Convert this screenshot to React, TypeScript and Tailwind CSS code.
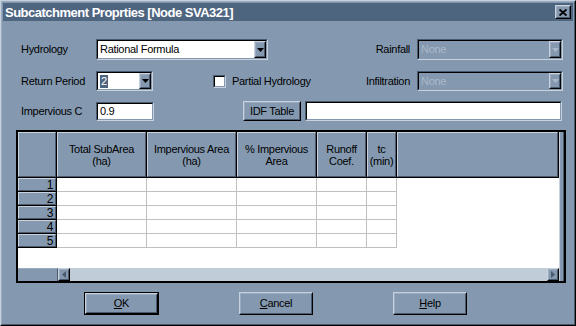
import React from 'react';

const font = { fontFamily: '"Liberation Sans", Arial, sans-serif' };

const Raised: React.FC<{ className?: string; children?: React.ReactNode }> = ({ className = '', children }) => (
  <div className={`border border-t-[#c8d2de] border-l-[#c8d2de] border-r-black border-b-black ${className}`}>
    <div className="w-full h-full border border-t-[#9aabc0] border-l-[#9aabc0] border-r-[#4a596c] border-b-[#4a596c] bg-[#8499b0] flex items-center justify-center">
      {children}
    </div>
  </div>
);

const Sunken: React.FC<{ className?: string; inner?: string; children?: React.ReactNode }> = ({ className = '', inner = 'bg-white', children }) => (
  <div className={`border border-t-[#4a596c] border-l-[#4a596c] border-r-[#c8d2de] border-b-[#c8d2de] ${className}`}>
    <div className={`w-full h-full border border-t-black border-l-black border-r-[#8499b0] border-b-[#8499b0] flex items-center ${inner}`}>
      {children}
    </div>
  </div>
);

const DownArrow: React.FC<{ disabled?: boolean }> = ({ disabled }) => (
  <svg width="7" height="4" viewBox="0 0 7 4">
    <polygon points="0,0 7,0 3.5,4" fill={disabled ? '#a9b8c8' : '#000'} />
  </svg>
);

const Combo: React.FC<{ w: string; text: string; disabled?: boolean; selected?: boolean }> = ({ w, text, disabled, selected }) => (
  <Sunken className={`${w} h-full`} inner={disabled ? 'bg-[#8499b0]' : 'bg-white'}>
    <div className="flex-1 pl-[2px] flex items-center">
      <span className={`leading-[13px] ${disabled ? 'text-[#a9b8c8]' : selected ? 'bg-[#4e6580] text-white px-[1px]' : 'text-black'}`}>{text}</span>
    </div>
    <Raised className="w-[12px] h-full mr-0">
      <DownArrow disabled={disabled} />
    </Raised>
  </Sunken>
);

const headers = [
  { w: 'w-[90px]', l1: 'Total SubArea', l2: '(ha)' },
  { w: 'w-[90px]', l1: 'Impervious Area', l2: '(ha)' },
  { w: 'w-[80px]', l1: '% Impervious', l2: 'Area' },
  { w: 'w-[50px]', l1: 'Runoff', l2: 'Coef.' },
  { w: 'w-[30px]', l1: 'tc', l2: '(min)' },
];

const HeadCell: React.FC<{ className: string; children?: React.ReactNode }> = ({ className, children }) => (
  <div className={`${className} h-full border-r border-b border-black`}>
    <div className="w-full h-full border border-t-[#c8d2de] border-l-[#c8d2de] border-r-[#4a596c] border-b-[#4a596c] bg-[#8499b0] flex flex-col items-center justify-center leading-[12px] text-center text-black">
      {children}
    </div>
  </div>
);

export default function App() {
  return (
    <div style={font} className="w-[576px] h-[326px] text-[11px] tracking-[-0.3px] text-black border border-t-[#c8d2de] border-l-[#c8d2de] border-r-black border-b-black overflow-hidden">
      <div className="w-full h-full border border-t-[#9aabc0] border-l-[#9aabc0] border-r-[#4a596c] border-b-[#4a596c] bg-[#8499b0] p-[1px] flex flex-col">
        {/* title bar */}
        <div className="h-[18px] bg-[#4e6580] flex items-center justify-between pl-[2px] pr-[2px]">
          <span className="text-white font-bold text-[13px] tracking-[-0.5px] leading-none">Subcatchment Proprties [Node SVA321]</span>
          <Raised className="w-[16px] h-[14px]">
            <svg width="8" height="7" viewBox="0 0 8 7">
              <path d="M0.5 0.5 L7.5 6.5 M7.5 0.5 L0.5 6.5" stroke="#000" strokeWidth="1.8" />
            </svg>
          </Raised>
        </div>

        {/* row 1 */}
        <div className="mt-[18px] h-[21px] flex items-center">
          <div className="w-[93px] pl-[18px]">Hydrology</div>
          <Combo w="w-[172px]" text="Rational Formula" />
          <div className="w-[149px] text-right pr-[7px]">Rainfall</div>
          <Combo w="w-[146px]" text="None" disabled />
        </div>

        {/* row 2 */}
        <div className="mt-[11px] h-[20px] flex items-center">
          <div className="w-[93px] pl-[18px]">Return Period</div>
          <Combo w="w-[57px]" text="2" selected />
          <div className="w-[264px] flex items-center">
            <Sunken className="ml-[60px] w-[13px] h-[13px]" />
            <span className="ml-[6px]">Partial Hydrology</span>
            <span className="ml-auto pr-[7px]">Infiltration</span>
          </div>
          <Combo w="w-[146px]" text="None" disabled />
        </div>

        {/* row 3 */}
        <div className="mt-[10px] h-[20px] flex items-center">
          <div className="w-[93px] pl-[18px]">Impervious C</div>
          <Sunken className="w-[58px] h-[19px]">
            <span className="pl-[2px]">0.9</span>
          </Sunken>
          <Raised className="ml-[89px] w-[58px] h-[20px]">
            <span>IDF Table</span>
          </Raised>
          <Sunken className="ml-[4px] w-[257px] h-[20px]" />
        </div>

        {/* grid */}
        <div className="mt-[9px] ml-[13px] w-[550px] h-[153px] border-2 border-black flex">
          <div className="flex-1 flex flex-col">
            <div className="h-[46px] flex">
              <HeadCell className="w-[39px]" />
              {headers.map((h) => (
                <HeadCell key={h.l1} className={h.w}>
                  <span>{h.l1}</span>
                  <span>{h.l2}</span>
                </HeadCell>
              ))}
              <HeadCell className="flex-1" />
            </div>
            <div className="flex-1 bg-white flex flex-col">
              {[1, 2, 3, 4, 5].map((n) => (
                <div key={n} className="h-[14px] flex">
                  <div className="w-[39px] h-full border-r border-b border-black">
                    <div className="w-full h-full border border-t-[#c8d2de] border-l-[#c8d2de] border-r-[#4a596c] border-b-[#4a596c] bg-[#8499b0] flex items-center justify-end pr-[2px] text-[12px] leading-none">
                      {n}
                    </div>
                  </div>
                  {headers.map((h) => (
                    <div key={h.l1} className={`${h.w} h-full border-r border-b border-[#c0c0c0]`} />
                  ))}
                </div>
              ))}
            </div>
            {/* horizontal scrollbar */}
            <div className="h-[13px] flex">
              <div className="w-[40px] h-full bg-[#8499b0] border-t border-t-[#9aabc0] border-r border-r-[#4a596c]" />
              <Raised className="w-[12px] h-full">
                <svg width="4" height="7" viewBox="0 0 4 7">
                  <polygon points="4,0 4,7 0,3.5" fill="#4a596c" />
                </svg>
              </Raised>
              <div className="flex-1 h-full bg-[#c0ccd8]" />
              <Raised className="w-[12px] h-full">
                <svg width="4" height="7" viewBox="0 0 4 7">
                  <polygon points="0,0 0,7 4,3.5" fill="#4a596c" />
                </svg>
              </Raised>
            </div>
          </div>
          <div className="w-[5px] h-full bg-[#8499b0] border-l border-l-[#c8d2de] border-r border-r-[#4a596c]" />
        </div>

        {/* buttons */}
        <div className="mt-[9px] h-[23px] flex">
          <div className="ml-[81px] w-[75px] h-full border border-black">
            <Raised className="w-full h-full">
              <span><u>O</u>K</span>
            </Raised>
          </div>
          <Raised className="ml-[80px] w-[74px] h-full">
            <span><u>C</u>ancel</span>
          </Raised>
          <Raised className="ml-[80px] w-[74px] h-full">
            <span><u>H</u>elp</span>
          </Raised>
        </div>
      </div>
    </div>
  );
}
